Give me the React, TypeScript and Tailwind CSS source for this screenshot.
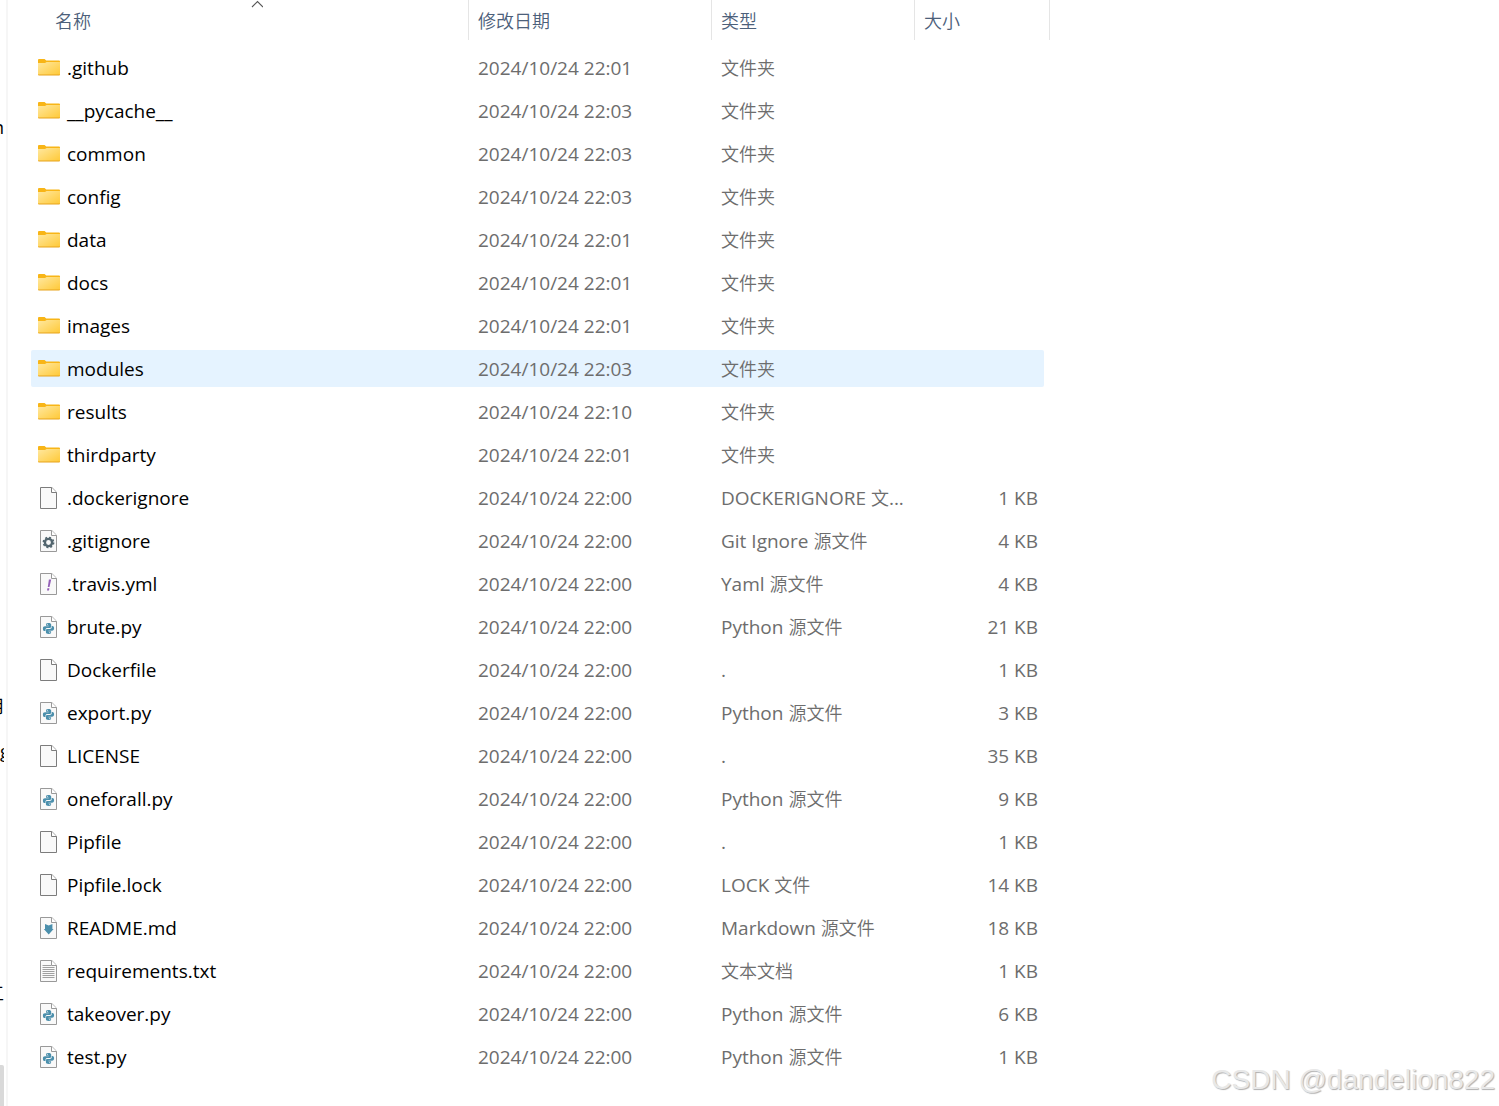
import type { ReactNode } from "react";

type Kind = "folder" | "blank" | "gear" | "yaml" | "python" | "markdown" | "text";

interface Entry {
  name: string;
  kind: Kind;
  date: string;
  type: string;
  size?: string;
  selected?: boolean;
}

const entries: Entry[] = [
  { name: ".github", kind: "folder", date: "2024/10/24 22:01", type: "文件夹" },
  { name: "__pycache__", kind: "folder", date: "2024/10/24 22:03", type: "文件夹" },
  { name: "common", kind: "folder", date: "2024/10/24 22:03", type: "文件夹" },
  { name: "config", kind: "folder", date: "2024/10/24 22:03", type: "文件夹" },
  { name: "data", kind: "folder", date: "2024/10/24 22:01", type: "文件夹" },
  { name: "docs", kind: "folder", date: "2024/10/24 22:01", type: "文件夹" },
  { name: "images", kind: "folder", date: "2024/10/24 22:01", type: "文件夹" },
  { name: "modules", kind: "folder", date: "2024/10/24 22:03", type: "文件夹", selected: true },
  { name: "results", kind: "folder", date: "2024/10/24 22:10", type: "文件夹" },
  { name: "thirdparty", kind: "folder", date: "2024/10/24 22:01", type: "文件夹" },
  { name: ".dockerignore", kind: "blank", date: "2024/10/24 22:00", type: "DOCKERIGNORE 文...", size: "1 KB" },
  { name: ".gitignore", kind: "gear", date: "2024/10/24 22:00", type: "Git Ignore 源文件", size: "4 KB" },
  { name: ".travis.yml", kind: "yaml", date: "2024/10/24 22:00", type: "Yaml 源文件", size: "4 KB" },
  { name: "brute.py", kind: "python", date: "2024/10/24 22:00", type: "Python 源文件", size: "21 KB" },
  { name: "Dockerfile", kind: "blank", date: "2024/10/24 22:00", type: ".", size: "1 KB" },
  { name: "export.py", kind: "python", date: "2024/10/24 22:00", type: "Python 源文件", size: "3 KB" },
  { name: "LICENSE", kind: "blank", date: "2024/10/24 22:00", type: ".", size: "35 KB" },
  { name: "oneforall.py", kind: "python", date: "2024/10/24 22:00", type: "Python 源文件", size: "9 KB" },
  { name: "Pipfile", kind: "blank", date: "2024/10/24 22:00", type: ".", size: "1 KB" },
  { name: "Pipfile.lock", kind: "blank", date: "2024/10/24 22:00", type: "LOCK 文件", size: "14 KB" },
  { name: "README.md", kind: "markdown", date: "2024/10/24 22:00", type: "Markdown 源文件", size: "18 KB" },
  { name: "requirements.txt", kind: "text", date: "2024/10/24 22:00", type: "文本文档", size: "1 KB" },
  { name: "takeover.py", kind: "python", date: "2024/10/24 22:00", type: "Python 源文件", size: "6 KB" },
  { name: "test.py", kind: "python", date: "2024/10/24 22:00", type: "Python 源文件", size: "1 KB" },
];

const FolderIcon = () => (
  <svg viewBox="0 0 22 20" className="w-[22px] h-5 shrink-0" aria-hidden="true">
    <defs>
      <linearGradient id="folder" x1="0" y1="0" x2="1" y2="1">
        <stop offset="0" stopColor="#ffe8a0" />
        <stop offset="1" stopColor="#ffc937" />
      </linearGradient>
    </defs>
    <path d="M0 2Q0 1 1 1H6.6L8.2 2.6H21Q22 2.6 22 3.6V6H0Z" fill="#f8b517" />
    <path d="M0 5H7L8.6 4H22V17H0Z" fill="url(#folder)" />
    <path d="M0 16.4H22V16.8Q22 17.6 21 17.6H1Q0 17.6 0 16.8Z" fill="#e8a41c" />
  </svg>
);

const marks: Record<Exclude<Kind, "folder">, ReactNode> = {
  blank: null,
  gear: (
    <g fill="none" stroke="#53666f">
      <circle cx="8.5" cy="12.5" r="3.6" strokeWidth="2.4" />
      <circle cx="8.5" cy="12.5" r="5.1" strokeWidth="1.6" strokeDasharray="2 2" />
    </g>
  ),
  yaml: <path d="M8.9 6.5H11.2L9.5 14H7.8ZM7.4 15.3H9.4L9 17.5H7Z" fill="#9460b8" />,
  python: (
    <g transform="translate(2.9 7)" fill="#4b8fac">
      <path d="M5.4 0C3.3 0 3.1.9 3.1 1.7V2.8H5.8V3.3H2C.7 3.3 0 4.1 0 5.7S.7 8 1.7 8H2.6V6.7C2.6 5.7 3.4 5 4.4 5H7C7.8 5 8.3 4.4 8.3 3.6V1.7C8.3.6 7.4 0 5.4 0ZM4.4.9A.5.5 0 1 1 4.4 1.9.5.5 0 0 1 4.4.9Z" />
      <path d="M5.9 11C8 11 8.2 10.1 8.2 9.3V8.2H5.5V7.7H9.2C10.5 7.7 11.2 6.9 11.2 5.3S10.5 3 9.5 3H8.8V4.3C8.8 5.3 7.9 6 6.9 6H4.3C3.5 6 3 6.6 3 7.4V9.3C3 10.4 3.9 11 5.9 11ZM6.9 10.1A.5.5 0 1 1 6.9 9.1.5.5 0 0 1 6.9 10.1Z" />
    </g>
  ),
  markdown: <path d="M5 7L8.7 8.6L12.4 7V12H13.6L8.7 17.4L3.8 12H5Z" fill="#4b8fac" />,
  text: <path d="M2.5 5.5H11M2.5 7.5H14.5M2.5 9.5H14.5M2.5 11.5H14.5M2.5 13.5H14.5M2.5 15.5H14.5M2.5 17.5H14.5" stroke="#a0a0a0" />,
};

const FileIcon = ({ kind }: { kind: Exclude<Kind, "folder"> }) => (
  <svg viewBox="0 0 17 22" className={`w-[17px] h-[22px] ml-[2px] mr-[3px] shrink-0 ${kind === "blank" ? "text-[#7c7c7c]" : "text-[#999999]"}`} aria-hidden="true">
    <path d="M.5 .5H11.8L16.5 5.2V21.5H.5Z" fill="#f9f9f9" stroke="currentColor" />
    <path d="M11.5 .5V5.5H16.5" fill="#ffffff" stroke="currentColor" />
    {marks[kind]}
  </svg>
);

// Chinese runs are set one step smaller than the Latin text beside them
const Mixed = ({ text }: { text: string }) => (
  <>
    {text.split(/([\u4e00-\u9fff]+)/).map((part, index) =>
      /[\u4e00-\u9fff]/.test(part) ? <span key={index} className="text-[18px] font-[350]">{part}</span> : part
    )}
  </>
);

const Sidebar = () => (
  <div className="w-2 shrink-0 border-r-2 border-[#f6f6f6] flex flex-col text-[18px] leading-6 text-black">
    <div className="w-1 grow overflow-hidden flex flex-col items-end">
      <span className="mt-[115px]">n</span>
      <span className="mt-[555px]">用</span>
      <span className="mt-[21px] self-start">g</span>
      <span className="mt-[218px]">工</span>
      <div className="mt-auto h-[41px] w-1 shrink-0 rounded-tr-xs bg-[#d9d9d9]" />
    </div>
  </div>
);

const App = () => {
  return (
    <div className="relative min-h-screen flex bg-white font-['Open_Sans','Noto_Sans_CJK_SC',sans-serif]">
      <Sidebar />

      {/* File list */}
      <main className="grow pl-[23px]">
        <table className="table-fixed w-[1019px] border-separate border-spacing-0 text-[19px] leading-6 text-[#6d6d6d]">
          <colgroup>
            <col className="w-[438px]" />
            <col className="w-[243px]" />
            <col className="w-[203px]" />
            <col className="w-[135px]" />
          </colgroup>
          <thead className="text-left text-[18px] text-[#4c607a]">
            <tr>
              <th className="relative p-0 pb-[6px] font-[350]">
                <div className="h-10 flex items-center border-r border-[#e5e5e5] pt-0.5 pl-6">名称</div>
                <svg viewBox="0 0 12 8" className="absolute left-[220px] top-0 w-3 h-2" aria-hidden="true">
                  <path d="M1 7L6.5 1.5L12 7" fill="none" stroke="#555555" strokeWidth="1.1" />
                </svg>
              </th>
              <th className="p-0 pb-[6px] font-[350]">
                <div className="h-10 flex items-center border-r border-[#e5e5e5] pt-0.5 pl-[9px]">修改日期</div>
              </th>
              <th className="p-0 pb-[6px] font-[350]">
                <div className="h-10 flex items-center border-r border-[#e5e5e5] pt-0.5 pl-[9px]">类型</div>
              </th>
              <th className="p-0 pb-[6px] font-[350]">
                <div className="h-10 flex items-center border-r border-[#e5e5e5] pt-0.5 pl-[9px]">大小</div>
              </th>
            </tr>
          </thead>
          <tbody>
            {entries.map((entry) => {
              const cell = entry.selected ? "h-[37px] flex items-center bg-[#e5f3ff]" : "h-[37px] flex items-center";
              return (
                <tr key={entry.name}>
                  <td className="px-0 py-[3px]">
                    <div className={`${cell} rounded-l-xs pl-[7px] gap-[7px] text-black`}>
                      {entry.kind === "folder" ? <FolderIcon /> : <FileIcon kind={entry.kind} />}
                      {entry.name}
                    </div>
                  </td>
                  <td className="px-0 py-[3px]">
                    <div className={`${cell} pl-[9px]`}>{entry.date}</div>
                  </td>
                  <td className="px-0 py-[3px]">
                    <div className={`${cell} pl-[9px]`}>
                      <span className="whitespace-nowrap"><Mixed text={entry.type} /></span>
                    </div>
                  </td>
                  <td className="px-0 py-[3px]">
                    <div className={`${cell} mr-[6px] pr-[6px] justify-end rounded-r-xs`}>{entry.size}</div>
                  </td>
                </tr>
              );
            })}
          </tbody>
        </table>
      </main>

      {/* Watermark */}
      <p className="absolute right-1 bottom-2 text-[28px] leading-9 text-[#e8e8e8] font-['Liberation_Sans',sans-serif] [text-shadow:1px_1px_1px_#b0b0b0]">
        CSDN @dandelion822
      </p>
    </div>
  );
};

export default App;
